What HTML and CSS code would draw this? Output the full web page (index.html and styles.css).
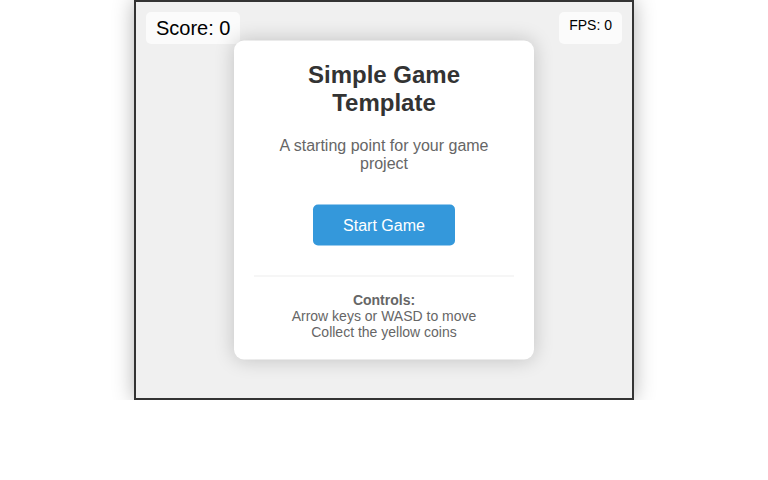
FILE: index.html
```html
<!DOCTYPE html>
<html>
<head>
<meta charset="utf-8">
<link rel="stylesheet" href="styles.css">
</head>
<body>
  <div class="game">
    <div class="hud">
      <div class="score">Score: 0</div>
      <div class="fps">FPS: 0</div>
    </div>
    <div class="menu">
      <h2 class="title">Simple Game Template</h2>
      <p class="subtitle">A starting point for your game project</p>
      <button class="start">Start Game</button>
      <div class="controls">
        <strong>Controls:</strong><br>
        Arrow keys or WASD to move<br>
        Collect the yellow coins
      </div>
    </div>
  </div>
</body>
</html>
```
FILE: styles.css
```css
html, body {
  margin: 0;
  padding: 0;
  background: #fff;
  font-family: "Liberation Sans", Arial, sans-serif;
}
body {
  display: flex;
  justify-content: center;
}
.game {
  position: relative;
  box-sizing: border-box;
  width: 500px;
  height: 400px;
  border: 2px solid #333;
  background: #f0f0f0;
  box-shadow: 0 0 20px rgba(0, 0, 0, 0.3);
}
.hud {
  display: flex;
  justify-content: space-between;
  align-items: stretch;
  padding: 10px;
}
.score, .fps {
  background: rgba(255, 255, 255, 0.7);
  padding: 5px 10px;
  border-radius: 5px;
  color: #000;
}
.score {
  font-size: 20px;
  line-height: 22px;
}
.fps {
  font-size: 14px;
  line-height: 16px;
}
.menu {
  position: absolute;
  top: 50%;
  left: 50%;
  transform: translate(-50%, -50%);
  width: 300px;
  box-sizing: border-box;
  padding: 20px;
  background: #fff;
  border-radius: 10px;
  box-shadow: 0 0 20px rgba(0, 0, 0, 0.2);
  text-align: center;
}
.title {
  margin: 0 0 20px;
  font-size: 24px;
  line-height: 28px;
  color: #333;
}
.subtitle {
  margin: 0 0 32px;
  font-size: 16px;
  line-height: 18px;
  color: #666;
}
.start {
  display: inline-block;
  margin: 0;
  padding: 12px 30px;
  font-family: "Liberation Sans", Arial, sans-serif;
  font-size: 16px;
  line-height: 17px;
  color: #fff;
  background: #3498db;
  border: none;
  border-radius: 5px;
  vertical-align: top;
}
.controls {
  margin-top: 30px;
  padding-top: 15px;
  border-top: 1px solid #eee;
  font-size: 14px;
  line-height: 16px;
  color: #666;
}
```
